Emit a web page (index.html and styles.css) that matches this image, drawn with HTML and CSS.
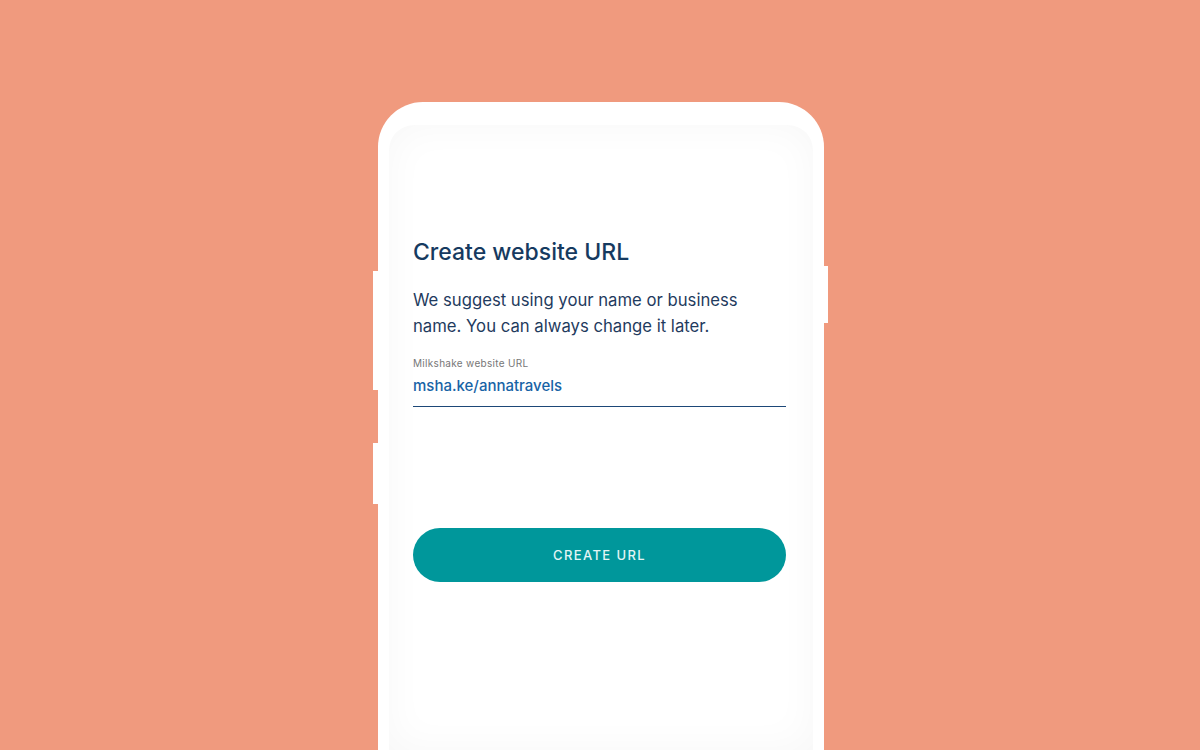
FILE: index.html
```html
<!DOCTYPE html>
<html>
<head>
<meta charset="utf-8">
<link rel="stylesheet" href="styles.css">
</head>
<body>
<div class="stage">
  <div class="phone">
    <div class="screen">
      <h1 class="title">Create website URL</h1>
      <p class="lead">We suggest using your name or business name. You can always change it later.</p>
      <div class="field">
        <div class="field-label">Milkshake website URL</div>
        <div class="field-value">msha.ke/annatravels</div>
      </div>
      <button class="cta">CREATE URL</button>
    </div>
  </div>
</div>
</body>
</html>
```
FILE: styles.css
```css
html, body {
  margin: 0;
  height: 100%;
}
body {
  background: #f09a7e;
  overflow: hidden;
  font-family: Inter, "Open Sans", sans-serif;
}
.stage {
  display: flex;
  justify-content: center;
  padding-top: 102px;
  padding-left: 2px;
}
.phone {
  position: relative;
  width: 446px;
  height: calc(100vh - 102px);
  background: #ffffff;
  border-radius: 45px 45px 0 0;
  padding: 23px 11px 0 11px;
  box-sizing: border-box;
}
.phone::before,
.phone::after {
  content: "";
  position: absolute;
}
.phone::before {
  left: -5px;
  top: 169px;
  width: 5px;
  height: 233px;
  background: linear-gradient(to bottom, #ffffff 0, #ffffff 119px, transparent 119px, transparent 172px, #ffffff 172px);
}
.phone::after {
  right: -4px;
  top: 164px;
  width: 4px;
  height: 57px;
  background: #ffffff;
}
.screen {
  height: 100%;
  border-radius: 25px 25px 0 0;
  background: #ffffff;
  box-shadow: inset 0 0 40px rgba(0, 0, 0, 0.035);
  padding: 112px 27px 0 24px;
  box-sizing: border-box;
  display: flex;
  flex-direction: column;
}
.title {
  margin: 0;
  font-size: 23px;
  font-weight: 500;
  color: #163a60;
  line-height: 30px;
}
.lead {
  margin: 20px 0 0 0;
  font-size: 16.7px;
  line-height: 26px;
  color: #1f3b5e;
}
.field {
  margin-top: 17px;
  border-bottom: 1px solid #1d4878;
  padding-bottom: 10px;
}
.field-label {
  font-size: 10px;
  letter-spacing: 0.3px;
  color: #777777;
  line-height: 14px;
}
.field-value {
  margin-top: 6px;
  font-size: 15px;
  font-weight: 500;
  color: #1863a6;
  line-height: 20px;
}
.cta {
  margin-top: 121px;
  height: 54px;
  border: none;
  border-radius: 27px;
  background: #00979b;
  color: #e3f5f5;
  font-family: inherit;
  font-size: 13px;
  letter-spacing: 1.4px;
  font-weight: 500;
}
```
